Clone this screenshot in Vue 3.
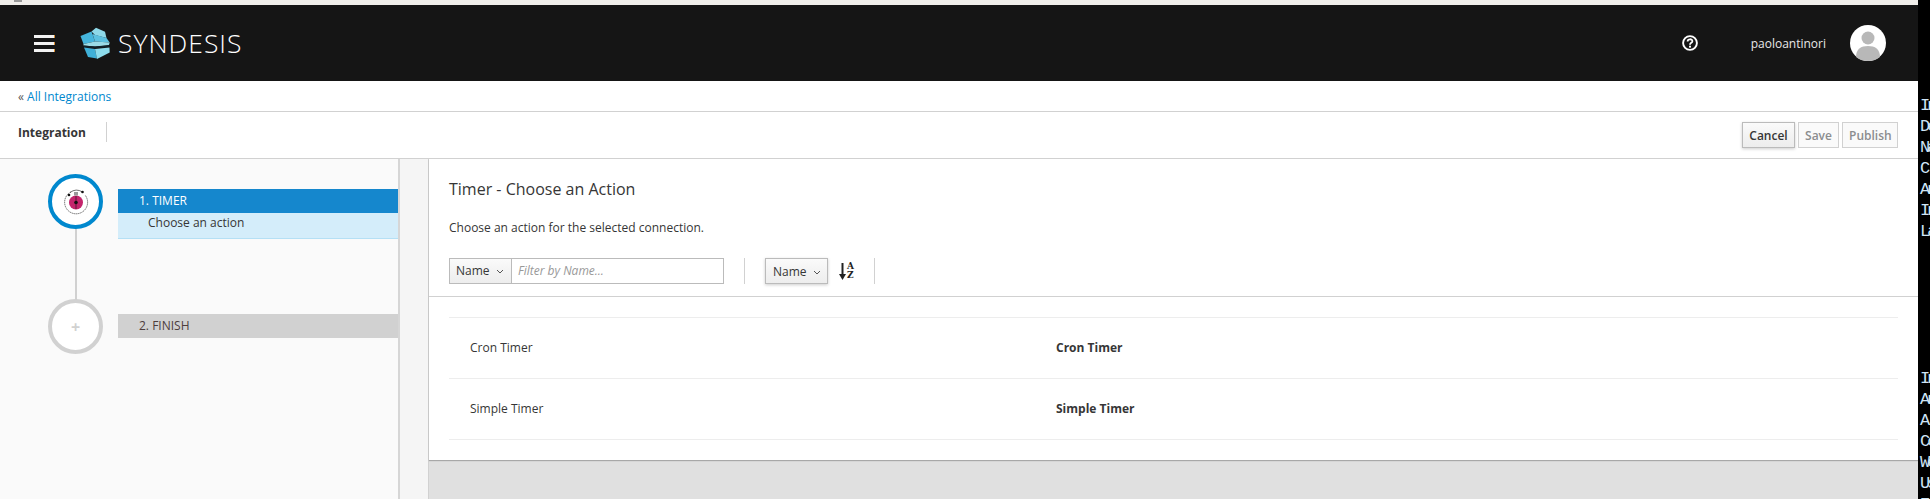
<script setup>
const termTop = ['In', 'De', 'Na', 'C', 'An', 'In', 'La'];
const termBottom = ['In', 'Au', 'A', 'Co', 'We', 'Us', 'E'];
const actions = ['Cron Timer', 'Simple Timer'];
</script>

<template>
	<div class="screen">
		<div class="app">
			<div class="browser-strip"><span class="browser-tab"></span></div>
			<header class="navbar">
				<div class="hamburger"><span></span><span></span><span></span></div>
				<svg class="logo" viewBox="0 0 30 33" width="30" height="33">
					<path d="M0.5 9 L11.5 4.5 L15 14.5 L3.5 17 Z" fill="#45b5dc" />
					<path d="M11.5 4.5 L16 0.7 L25 4.7 L26.5 11 L15 8 Z" fill="#8ed8e8" />
					<path d="M12.5 7 L26.5 11 L29.7 15.5 L15 14.5 Z" fill="#5cc0df" />
					<path d="M3.5 17 L15 14.5 L29.7 15.5 L29 18 L15 19.5 L3.5 18.5 Z" fill="#9adbe6" />
					<path d="M3.5 18.5 L15 19.5 L29 18.5 L29.5 20 L15 21 L4 20.5 Z" fill="#10232b" />
					<path d="M4 20.5 L15 22 L17 31.5 L8 30 Z" fill="#3fb0d8" />
					<path d="M15 22 L29.5 20.5 L29.7 25.5 L17 32 Z" fill="#8ddcec" />
				</svg>
				<span class="brand">SYNDESIS</span>
				<div class="nav-right">
					<svg class="help" viewBox="0 0 16 16" width="16" height="16">
						<circle cx="8" cy="8" r="6.9" fill="none" stroke="#fff" stroke-width="1.9" />
						<path d="M5.6 6.4 C5.6 3.6 10.4 3.6 10.4 6.2 C10.4 7.9 8 7.8 8 9.7" fill="none" stroke="#fff" stroke-width="1.8" />
						<rect x="7" y="10.7" width="2" height="1.9" fill="#fff" />
					</svg>
					<span class="username">paoloantinori</span>
					<svg class="avatar" viewBox="0 0 36 36" width="36" height="36">
						<circle cx="18" cy="18" r="18" fill="#fff" />
						<circle cx="18" cy="13" r="6.5" fill="#b8b8b8" />
						<path d="M6 32 C6 24 11 21 18 21 C25 21 30 24 30 32 C26 35 22 36 18 36 C14 36 10 35 6 32 Z" fill="#b8b8b8" />
					</svg>
				</div>
			</header>

			<div class="breadcrumb"><span class="crumb-arrows">«</span> <a class="crumb-link">All Integrations</a></div>

			<div class="toolbar">
				<div class="toolbar-left">
					<strong class="toolbar-title">Integration</strong>
					<span class="toolbar-sep"></span>
				</div>
				<div class="toolbar-actions">
					<button class="btn btn-active">Cancel</button>
					<button class="btn btn-disabled">Save</button>
					<button class="btn btn-disabled btn-last">Publish</button>
				</div>
			</div>

			<div class="content">
				<aside class="sidebar">
					<div class="line"></div>
					<div class="step step-one">
						<div class="step-circle step-circle-active">
							<svg viewBox="0 0 26 26" width="26" height="26">
								<path d="M8 3 A11.5 11.5 0 1 0 22 6" fill="none" stroke="#333" stroke-width="0.7" stroke-dasharray="1.4 0.6" />
								<path d="M7 3.5 A11 11 0 0 1 19.5 3" fill="none" stroke="#333" stroke-width="0.7" />
								<circle cx="13" cy="13.5" r="7" fill="#c4246c" />
								<rect x="11" y="3" width="4" height="3.5" fill="#999" />
								<circle cx="6" cy="6" r="1.3" fill="#111" />
								<circle cx="19.5" cy="3" r="1.3" fill="#111" />
								<circle cx="13" cy="13.5" r="1.8" fill="#111" />
								<path d="M13 7 V20" stroke="#111" stroke-width="0.6" />
							</svg>
						</div>
						<div class="step-body">
							<div class="step-bar step-bar-active">1. TIMER</div>
							<div class="step-sub">Choose an action</div>
						</div>
					</div>
					<div class="step step-two">
						<div class="step-circle"><span class="plus">+</span></div>
						<div class="step-body">
							<div class="step-bar step-bar-idle">2. FINISH</div>
						</div>
					</div>
				</aside>
				<div class="gutter"></div>
				<main class="main">
					<section class="panel">
						<div class="panel-head">
							<h2 class="panel-title">Timer - Choose an Action</h2>
							<p class="panel-desc">Choose an action for the selected connection.</p>
							<div class="filters">
								<div class="filter-group">
									<span class="filter-type">Name
										<svg class="chev" viewBox="0 0 8 5" width="8" height="5"><path d="M1 1 L4 4 L7 1" fill="none" stroke="#555" stroke-width="1" /></svg>
									</span>
									<span class="filter-input">Filter by Name...</span>
								</div>
								<span class="filter-sep"></span>
								<span class="sort-btn">Name
									<svg class="chev" viewBox="0 0 8 5" width="8" height="5"><path d="M1 1 L4 4 L7 1" fill="none" stroke="#555" stroke-width="1" /></svg>
								</span>
								<span class="sort-icon">
									<svg viewBox="0 0 7 17" width="7" height="17"><path d="M3.5 0 V12" stroke="#222" stroke-width="2" /><path d="M0 11 H7 L3.5 17 Z" fill="#222" /></svg>
									<span class="sort-letters"><span>A</span><span>Z</span></span>
								</span>
								<span class="filter-sep filter-sep-end"></span>
							</div>
						</div>
						<div class="list">
							<div class="list-row" v-for="action in actions" :key="action">
								<span class="list-name">{{ action }}</span>
								<strong class="list-desc">{{ action }}</strong>
							</div>
						</div>
					</section>
				</main>
			</div>
		</div>
		<div class="terminal">
			<div class="term-block">
				<div v-for="(t, i) in termTop" :key="i">{{ t }}</div>
			</div>
			<div class="term-block term-block-low">
				<div v-for="(t, i) in termBottom" :key="i">{{ t }}</div>
			</div>
		</div>
	</div>
</template>

<style scoped>
.screen {
	display: flex;
	width: 1930px;
	height: 499px;
	overflow: hidden;
	font-family: 'Open Sans', 'Noto Sans', sans-serif;
	font-size: 12px;
	color: #363636;
	background: #fff;
}

.app {
	width: 1918px;
	flex: none;
	display: flex;
	flex-direction: column;
}

.browser-strip {
	height: 5px;
	background: #f0eeea;
	flex: none;
}

.browser-tab {
	display: block;
	width: 8px;
	height: 2px;
	margin-left: 14px;
	background: #999;
}

/* Top nav */
.navbar {
	height: 76px;
	flex: none;
	display: flex;
	align-items: center;
	background: #151515;
	padding-left: 34px;
}

.hamburger {
	width: 21px;
	display: flex;
	flex-direction: column;
	gap: 4px;
	margin-right: 25px;
}

.hamburger span {
	height: 3px;
	background: #f2f2f2;
	border-right: 1px solid #d98c2f;
}

.logo {
	margin-right: 8px;
}

.brand {
	font-size: 26.5px;
	font-weight: 300;
	color: #fff;
	letter-spacing: 1px;
}

.nav-right {
	margin-left: auto;
	display: flex;
	align-items: center;
	padding-right: 32px;
}

.help {
	margin-right: 53px;
}

.username {
	color: #e8e8e8;
	margin-right: 24px;
}

/* Breadcrumb + toolbar */
.breadcrumb {
	height: 30px;
	flex: none;
	padding-left: 18px;
	line-height: 32px;
	border-bottom: 1px solid #d1d1d1;
	font-size: 12px;
}

.crumb-arrows {
	color: #555;
}

.crumb-link {
	color: #0088ce;
}

.toolbar {
	height: 46px;
	flex: none;
	display: flex;
	align-items: center;
	padding: 0 20px 0 18px;
	border-bottom: 1px solid #d1d1d1;
}

.toolbar-left {
	display: flex;
	align-items: center;
	margin-bottom: 6px;
}

.toolbar-title {
	font-weight: 700;
	color: #363636;
}

.toolbar-sep {
	width: 1px;
	height: 20px;
	margin-left: 20px;
	background: #d1d1d1;
}

.toolbar-actions {
	margin-left: auto;
	display: flex;
	gap: 3px;
}

.btn {
	height: 26px;
	padding: 0 6px;
	font-family: inherit;
	font-size: 12px;
	border: 1px solid #bbb;
	background: #f5f5f5;
}

.btn-active {
	width: 53px;
	font-weight: 600;
	color: #363636;
	background: linear-gradient(#fafafa, #ededed);
	box-shadow: 0 1px 3px rgba(0, 0, 0, 0.2);
}

.btn-disabled {
	width: 41px;
	font-weight: 600;
	color: #8b8d8f;
	border-color: #d1d1d1;
	background: #fafafa;
}

.btn-last {
	width: 56px;
}

/* Body */
.content {
	flex: 1;
	display: flex;
	min-height: 0;
}

.sidebar {
	width: 398px;
	flex: none;
	position: relative;
	background: #fafafa;
	padding-top: 15px;
	box-sizing: border-box;
}

.line {
	position: absolute;
	left: 75px;
	top: 60px;
	width: 2px;
	height: 90px;
	background: #d1d1d1;
}

.step {
	position: relative;
	display: flex;
	padding-left: 48px;
}

.step-one {
	height: 125px;
}

.step-circle {
	width: 55px;
	height: 55px;
	box-sizing: border-box;
	flex: none;
	border: 4px solid #d1d1d1;
	border-radius: 50%;
	background: #fff;
	display: flex;
	align-items: center;
	justify-content: center;
}

.step-circle-active {
	border-color: #0088ce;
}

.plus {
	color: #d1d1d1;
	font-size: 16px;
	font-weight: 700;
}

.step-body {
	flex: 1;
	margin-left: 15px;
	padding-top: 15px;
}

.step-bar {
	height: 24px;
	line-height: 24px;
	padding-left: 21px;
}

.step-bar-active {
	background: #1587cd;
	color: #fff;
}

.step-bar-idle {
	background: #d1d1d1;
	color: #4d3d3d;
}

.step-sub {
	height: 25px;
	line-height: 20px;
	padding-left: 30px;
	background: #d4edfa;
	border-bottom: 1px solid #b5e0f5;
}

.gutter {
	width: 31px;
	flex: none;
	box-sizing: border-box;
	background: #f5f5f5;
	border-left: 2px solid #d6d6d6;
	border-right: 1px solid #d1d1d1;
}

.main {
	flex: 1;
	min-width: 0;
	background: #e0e0e0;
}

.panel {
	height: 301px;
	background: #fff;
	box-shadow: 0 1px 1px rgba(0, 0, 0, 0.25);
}

.panel-head {
	height: 138px;
	box-sizing: border-box;
	padding: 19px 20px 0;
	border-bottom: 1px solid #d1d1d1;
}

.panel-title {
	margin: 0;
	font-size: 16px;
	font-weight: 400;
	line-height: 22px;
	color: #363636;
}

.panel-desc {
	margin: 19px 0 0;
	line-height: 17px;
}

.filters {
	display: flex;
	align-items: center;
	margin-top: 22px;
	height: 26px;
}

.filter-group {
	display: flex;
	width: 275px;
	height: 26px;
	box-sizing: border-box;
	border: 1px solid #bbb;
}

.filter-type {
	width: 62px;
	flex: none;
	box-sizing: border-box;
	padding-left: 6px;
	line-height: 24px;
	font-weight: 500;
	background: linear-gradient(#fafafa, #ededed);
	border-right: 1px solid #bbb;
}

.chev {
	margin-left: 3px;
	vertical-align: 1px;
}

.filter-input {
	padding-left: 6px;
	line-height: 24px;
	font-style: italic;
	color: #999;
}

.filter-sep {
	width: 1px;
	height: 26px;
	margin-left: 20px;
	background: #d1d1d1;
}

.sort-btn {
	width: 63px;
	height: 26px;
	box-sizing: border-box;
	margin-left: 20px;
	padding-left: 7px;
	line-height: 25px;
	font-weight: 500;
	border: 1px solid #bbb;
	background: linear-gradient(#fafafa, #ededed);
	box-shadow: 0 1px 3px rgba(0, 0, 0, 0.2);
}

.sort-icon {
	display: flex;
	align-items: center;
	gap: 1px;
	margin-left: 11px;
}

.sort-letters {
	display: flex;
	flex-direction: column;
	font-family: 'DejaVu Serif', serif;
	font-size: 9px;
	font-weight: 700;
	line-height: 9px;
	color: #222;
}

.filter-sep-end {
	margin-left: 20px;
}

.list {
	margin: 20px 20px 0;
	border-top: 1px solid #ededed;
}

.list-row {
	height: 60px;
	box-sizing: content-box;
	display: flex;
	align-items: center;
	padding-left: 21px;
	border-bottom: 1px solid #ededed;
}

.list-name {
	width: 586px;
	flex: none;
	margin-bottom: 1px;
}

.list-desc {
	font-weight: 700;
	margin-bottom: 1px;
}

/* Terminal peeking in on the right */
.terminal {
	flex: 1;
	min-width: 0;
	background: #000;
	padding: 95px 0 0 2px;
	overflow: hidden;
	font-family: 'Liberation Mono', 'DejaVu Sans Mono', monospace;
	font-size: 17px;
	letter-spacing: -3px;
	line-height: 21px;
	color: #cfe4f5;
}

.term-block-low {
	margin-top: 126px;
}
</style>

<style>
html,
body {
	margin: 0;
	overflow: hidden;
}
</style>
